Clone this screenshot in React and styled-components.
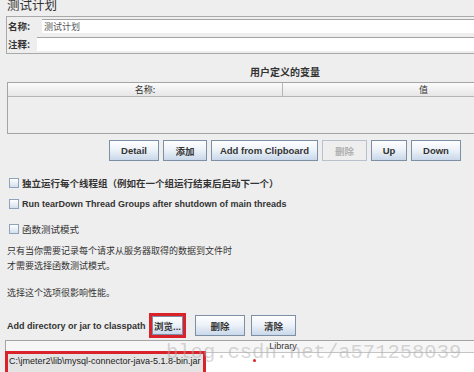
import React from "react";
import styled, { createGlobalStyle } from "styled-components";

const GlobalStyle = createGlobalStyle`
  html, body { margin: 0; padding: 0; background: #eeeeee; overflow: hidden; }
  body { font-family: "Liberation Sans", "Noto Sans CJK SC", sans-serif; color: #333; }
`;

const Page = styled.div`
  position: relative;
  width: 474px;
  height: 372px;
  overflow: hidden;
  background: #eeeeee;
`;

const Inner = styled.div`
  width: 570px;
  display: flex;
  flex-direction: column;
`;

const Title = styled.div`
  margin-top: -2px;
  padding-left: 7px;
  height: 13px;
  font-size: 12.5px;
  line-height: 13px;
  color: #333;
  font-family: "Noto Sans CJK SC", sans-serif;
`;

const NamePanel = styled.div`
  margin: 5px 0 0 6px;
  width: 556px;
  border: 1px solid #a9a9a9;
  padding: 2px 0 2px 1px;
  display: flex;
  flex-direction: column;
  gap: 4px;
`;

const FieldRow = styled.div`
  display: flex;
  align-items: center;
  height: 14px;
`;

const FieldLabel = styled.span`
  width: ${(p) => p.$w}px;
  font-size: 9.5px;
  font-weight: bold;
  color: #333;
  font-family: "Noto Sans CJK SC", sans-serif;
  flex: none;
`;

const FieldInput = styled.div`
  flex: 1;
  height: 13px;
  background: #ffffff;
  border-top: 1px solid #a4a4a4;
  font-size: 9px;
  line-height: 13px;
  padding-left: 2px;
  color: #555;
  font-family: "Noto Sans CJK SC", sans-serif;
`;

const SectionTitle = styled.div`
  margin-top: 12px;
  width: 570px;
  text-align: center;
  font-size: 10px;
  line-height: 12px;
  font-weight: bold;
  color: #333;
  font-family: "Noto Sans CJK SC", sans-serif;
`;

const VarTable = styled.div`
  margin: 4px 0 0 7px;
  width: 556px;
  height: 50px;
  border: 1px solid #a4a4a4;
  display: flex;
  flex-direction: column;
`;

const HeaderRow = styled.div`
  display: grid;
  grid-template-columns: ${(p) => p.$cols};
  height: 13px;
  background: linear-gradient(#fbfbfb, #e6e6e6);
  border-bottom: 1px solid #b5b5b5;
`;

const HeaderCell = styled.div`
  text-align: center;
  font-size: 9px;
  line-height: 13px;
  color: #333;
  font-family: "Noto Sans CJK SC", sans-serif;
  border-right: ${(p) => (p.$divider ? "1px solid #b5b5b5" : "none")};
`;

const ButtonRow = styled.div`
  margin: 6px 0 0 7px;
  width: 556px;
  display: flex;
  justify-content: center;
  gap: 4px;
`;

const Button = styled.div`
  box-sizing: border-box;
  width: ${(p) => p.$w}px;
  height: ${(p) => p.$h || 21}px;
  border: 1px solid ${(p) => (p.$disabled ? "#b9c2cc" : "#7d8fa5")};
  background: ${(p) =>
    p.$disabled ? "#eeeeee" : "linear-gradient(#fdfeff 0%, #eef3f9 45%, #c9d8ea 100%)"};
  display: flex;
  align-items: center;
  justify-content: center;
  font-size: 9.5px;
  font-weight: bold;
  white-space: nowrap;
  color: ${(p) => (p.$disabled ? "#b0b0b0" : "#333")};
  font-family: "Liberation Sans", "Noto Sans CJK SC", sans-serif;
  outline: ${(p) => (p.$highlight ? "3px solid #d9222a" : "none")};
  flex: none;
`;

const CheckRow = styled.div`
  margin: ${(p) => p.$mt}px 0 0 9px;
  display: flex;
  align-items: center;
  gap: 3px;
  height: 12px;
`;

const Box = styled.span`
  box-sizing: border-box;
  width: 10px;
  height: 10px;
  border: 1px solid #8ea3ba;
  background: linear-gradient(#ffffff, #d3dfec);
  flex: none;
`;

const CheckLabel = styled.span`
  font-size: ${(p) => p.$size || 9.5}px;
  font-weight: ${(p) => (p.$bold ? "bold" : "normal")};
  color: #333;
  white-space: nowrap;
  font-family: "Liberation Sans", "Noto Sans CJK SC", sans-serif;
`;

const Note = styled.div`
  margin: ${(p) => p.$mt}px 0 0 7px;
  font-size: 9px;
  line-height: 15px;
  color: #333;
  font-family: "Noto Sans CJK SC", sans-serif;
`;

const ClasspathRow = styled.div`
  margin: 13px 0 0 7px;
  display: flex;
  align-items: center;
  height: 25px;
`;

const ClasspathLabel = styled.span`
  font-size: 9px;
  font-weight: bold;
  color: #333;
  width: 145px;
  white-space: nowrap;
  flex: none;
`;

const ClasspathButtons = styled.div`
  display: flex;
  align-items: center;
  gap: ${(p) => p.$gap}px;
`;

const LibTable = styled.div`
  margin: 2px 0 0 5px;
  width: 554px;
  border-top: 1px solid #a4a4a4;
  border-left: 1px solid #a4a4a4;
  display: flex;
  flex-direction: column;
`;

const LibHeader = styled.div`
  height: 11px;
  background: #f6f6f6;
  text-align: center;
  font-size: 9px;
  line-height: 11px;
  color: #333;
  border-bottom: 1px solid #c4c4c4;
`;

const LibRow = styled.div`
  height: 20px;
  background: #ffffff;
  display: flex;
  align-items: flex-start;
`;

const PathCell = styled.div`
  margin: 0 0 0 1px;
  padding: 2px 3px 0 2px;
  height: 20px;
  box-sizing: border-box;
  font-size: 9px;
  line-height: 12px;
  color: #222;
  background: #e4e4e4;
  outline: 3px solid #d9222a;
  outline-offset: -1px;
  white-space: nowrap;
`;

const Watermark = styled.div`
  position: absolute;
  left: 166px;
  top: 343px;
  font-family: "Liberation Mono", monospace;
  font-size: 20.5px;
  line-height: 20px;
  color: rgba(175, 175, 175, 0.5);
  white-space: nowrap;
  pointer-events: none;
`;

const Dot = styled.div`
  position: absolute;
  left: 253px;
  top: 359px;
  width: 3px;
  height: 3px;
  border-radius: 50%;
  background: #d22;
`;

export default function App() {
  return (
    <>
      <GlobalStyle />
      <Page>
        <Inner>
          <Title>测试计划</Title>
          <NamePanel>
            <FieldRow>
              <FieldLabel $w={34}>名称:</FieldLabel>
              <FieldInput>测试计划</FieldInput>
            </FieldRow>
            <FieldRow>
              <FieldLabel $w={29}>注释:</FieldLabel>
              <FieldInput />
            </FieldRow>
          </NamePanel>

          <SectionTitle>用户定义的变量</SectionTitle>
          <VarTable>
            <HeaderRow $cols="275px 1fr">
              <HeaderCell $divider>名称:</HeaderCell>
              <HeaderCell>值</HeaderCell>
            </HeaderRow>
          </VarTable>

          <ButtonRow>
            <Button $w={50}>Detail</Button>
            <Button $w={44}>添加</Button>
            <Button $w={107}>Add from Clipboard</Button>
            <Button $w={45} $disabled>删除</Button>
            <Button $w={36}>Up</Button>
            <Button $w={50}>Down</Button>
          </ButtonRow>

          <CheckRow $mt={16}>
            <Box />
            <CheckLabel $bold>独立运行每个线程组（例如在一个组运行结束后启动下一个）</CheckLabel>
          </CheckRow>
          <CheckRow $mt={9}>
            <Box />
            <CheckLabel $bold $size={9}>Run tearDown Thread Groups after shutdown of main threads</CheckLabel>
          </CheckRow>
          <CheckRow $mt={13}>
            <Box />
            <CheckLabel>函数测试模式</CheckLabel>
          </CheckRow>

          <Note $mt={8}>
            只有当你需要记录每个请求从服务器取得的数据到文件时
            <br />
            才需要选择函数测试模式。
          </Note>
          <Note $mt={12}>选择这个选项很影响性能。</Note>

          <ClasspathRow>
            <ClasspathLabel>Add directory or jar to classpath</ClasspathLabel>
            <ClasspathButtons $gap={12}>
              <Button $w={31} $h={19} $highlight>浏览...</Button>
              <ClasspathButtons $gap={6}>
                <Button $w={50} $h={21}>删除</Button>
                <Button $w={45} $h={21}>清除</Button>
              </ClasspathButtons>
            </ClasspathButtons>
          </ClasspathRow>

          <LibTable>
            <LibHeader>Library</LibHeader>
            <LibRow>
              <PathCell>C:\jmeter2\lib\mysql-connector-java-5.1.8-bin.jar</PathCell>
            </LibRow>
          </LibTable>
        </Inner>
        <Watermark>blog.csdn.net/a571258039</Watermark>
        <Dot />
      </Page>
    </>
  );
}
